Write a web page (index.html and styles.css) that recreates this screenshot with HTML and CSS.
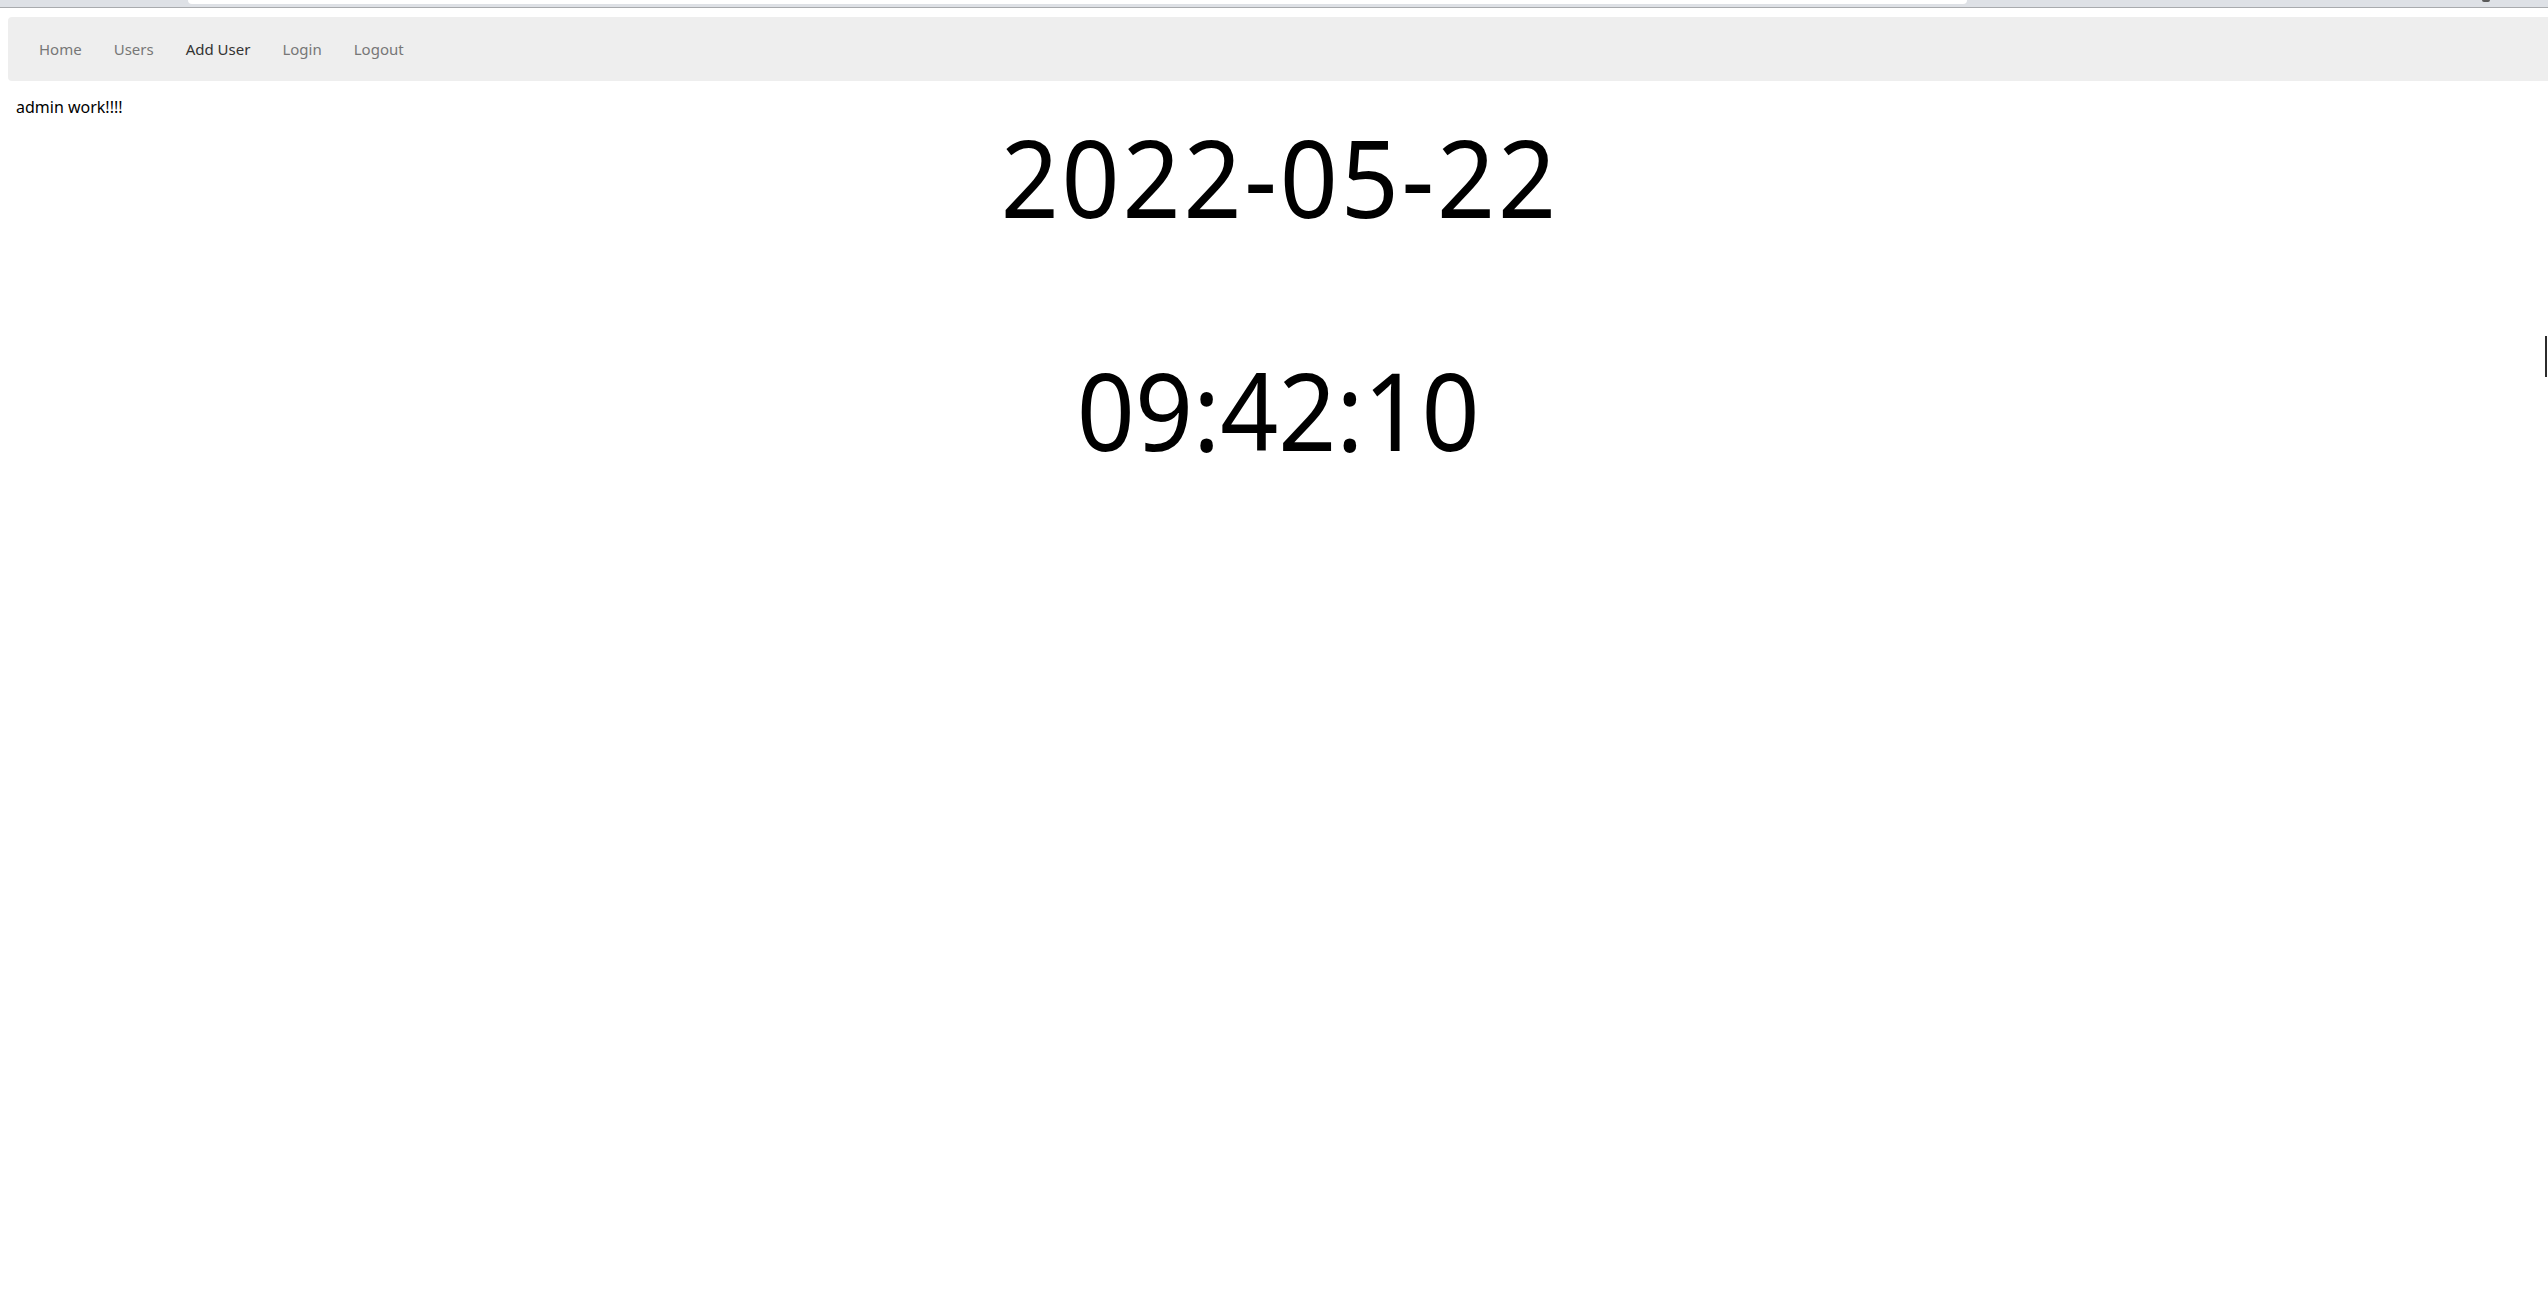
FILE: index.html
```html
<!DOCTYPE html>
<html lang="en">
<head>
<meta charset="utf-8">
<title>Admin</title>
<link rel="stylesheet" href="styles.css">
</head>
<body>
  <div class="chrome">
    <div class="omnibox"></div>
    <span class="chrome-icon"></span>
  </div>
  <main class="page">
    <nav class="navbar">
      <ul class="nav">
        <li><a href="#">Home</a></li>
        <li><a href="#">Users</a></li>
        <li class="active"><a href="#">Add User</a></li>
        <li><a href="#">Login</a></li>
        <li><a href="#">Logout</a></li>
      </ul>
    </nav>
    <div class="container">
      <p class="message">admin work!!!!</p>
      <div class="clock">
        <div class="date"><span>2022-05-22</span></div>
        <div class="time"><span>09:42:10</span></div>
      </div>
    </div>
  </main>
  <div class="cursor"></div>
</body>
</html>
```
FILE: styles.css
```css
html, body {
  margin: 0;
  padding: 0;
  background: #ffffff;
}

body {
  font-family: "Noto Sans", "Open Sans", sans-serif;
  font-size: 16px;
  color: #000;
  overflow: hidden;
  width: 2548px;
  height: 1312px;
  position: relative;
}

.chrome {
  height: 7px;
  background: #dee1e6;
  border-bottom: 1px solid #a9abae;
  position: relative;
}

.omnibox {
  margin-left: 188px;
  width: 1779px;
  height: 4px;
  background: #ffffff;
  border-radius: 0 0 6px 6px;
}

.chrome-icon {
  position: absolute;
  left: 2482px;
  top: 0;
  width: 8px;
  height: 2px;
  background: #5a5a5a;
  border-radius: 0 0 3px 3px;
}

.page {
  padding-left: 8px;
}

.navbar {
  margin-top: 9px;
  height: 64px;
  background: #eeeeee;
  border-radius: 4px 0 0 4px;
  display: flex;
  align-items: center;
  padding-left: 15px;
}

.nav {
  list-style: none;
  margin: 0;
  padding: 0;
  display: flex;
  align-items: center;
}

.nav a {
  display: block;
  padding: 0 16px;
  color: #777777;
  text-decoration: none;
  font-size: 15px;
  line-height: 20px;
}

.nav .active a {
  color: #333333;
}

.container {
  padding: 0 8px;
}

.message {
  margin: 16px 0 0 0;
  line-height: 20px;
  font-size: 16px;
}

.clock {
  margin-top: 0;
  display: flex;
  flex-direction: column;
  align-items: center;
  gap: 113px;
  font-size: 108px;
  line-height: 120px;
  color: #000;
}

.date span,
.time span {
  display: inline-block;
  transform: scaleX(0.94);
  transform-origin: center;
}

.date span {
  letter-spacing: 3px;
  padding-left: 3px;
}

.cursor {
  position: absolute;
  left: 2545px;
  top: 336px;
  width: 2px;
  height: 41px;
  background: #2b2b2b;
}
```
